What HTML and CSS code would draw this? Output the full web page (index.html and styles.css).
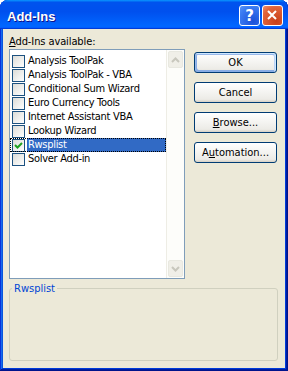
FILE: index.html
```html
<!DOCTYPE html>
<html>
<head>
<title>Add-Ins</title>
<link rel="stylesheet" href="styles.css">
</head>
<body>
<div class="window">
    <div class="title-bar">
        <span class="title">Add-Ins</span>
        <div class="title-buttons">
            <span class="tb tb-help">?</span>
            <span class="tb tb-close">
                <svg width="21" height="21" viewBox="0 0 21 21"><path d="M6 6 L14 14 M14 6 L6 14" stroke="#fff" stroke-width="2" fill="none"/></svg>
            </span>
        </div>
    </div>

    <div class="client">
        <div class="main">
            <div class="left">
                <div class="label"><u>A</u>dd-Ins available:</div>
                <div class="listbox">
                    <ul class="items">
                        <li><span class="cb"></span><span class="text">Analysis ToolPak</span></li>
                        <li><span class="cb"></span><span class="text">Analysis ToolPak - VBA</span></li>
                        <li><span class="cb"></span><span class="text">Conditional Sum Wizard</span></li>
                        <li><span class="cb"></span><span class="text">Euro Currency Tools</span></li>
                        <li><span class="cb"></span><span class="text">Internet Assistant VBA</span></li>
                        <li><span class="cb"></span><span class="text">Lookup Wizard</span></li>
                        <li class="selected"><span class="cb checked"><svg width="11" height="11" viewBox="0 0 11 11"><path d="M2 5 L4.5 7.5 L9 3" stroke="#21a121" stroke-width="2" fill="none"/></svg></span><span class="text">Rwsplist</span></li>
                        <li><span class="cb"></span><span class="text">Solver Add-in</span></li>
                    </ul>
                    <div class="scrollbar">
                        <div class="sb-btn">
                            <svg width="9" height="6" viewBox="0 0 9 6"><path d="M1 5 L4.5 1.5 L8 5" stroke="#c8c7bd" stroke-width="2" fill="none"/></svg>
                        </div>
                        <div class="track"></div>
                        <div class="sb-btn">
                            <svg width="9" height="6" viewBox="0 0 9 6"><path d="M1 1 L4.5 4.5 L8 1" stroke="#c8c7bd" stroke-width="2" fill="none"/></svg>
                        </div>
                    </div>
                </div>
            </div>

            <div class="buttons">
                <div class="btn default">OK</div>
                <div class="btn">Cancel</div>
                <div class="btn"><u>B</u>rowse...</div>
                <div class="btn">A<u>u</u>tomation...</div>
            </div>
        </div>

        <fieldset class="group">
            <legend>Rwsplist</legend>
        </fieldset>
    </div>
</div>
</body>
</html>
```

FILE: styles.css
```css
html, body {
    margin: 0;
    padding: 0;
    background: #fff;
}

body {
    width: 288px;
    height: 371px;
    font-family: "DejaVu Sans Condensed", "DejaVu Sans", sans-serif;
    font-stretch: condensed;
    font-size: 11px;
    color: #000;
}

.window {
    width: 288px;
    height: 371px;
    box-sizing: border-box;
    padding: 0 3px 3px 3px;
    background: #0831d9;
    border-radius: 8px 8px 0 0;
    box-shadow: inset -1px -1px #00138c, inset 1px 1px #0831d9, inset -2px -2px #001ea0, inset 2px 2px #166aee, inset -3px -3px #003bda, inset 3px 3px #0855dd;
    display: flex;
    flex-direction: column;
}

.title-bar {
    height: 29px;
    margin: 0 -3px;
    padding: 0 5px 0 7px;
    box-sizing: border-box;
    border-radius: 8px 8px 0 0;
    background: linear-gradient(180deg, #0997ff, #0053ee 8%, #0050ee 40%, #06f 88%, #06f 93%, #005bff 95%, #003dd7 96%, #003dd7);
    display: flex;
    align-items: center;
    justify-content: space-between;
}

.title {
    color: #fff;
    font-family: "Liberation Sans", Arial, sans-serif;
    font-stretch: normal;
    font-weight: bold;
    font-size: 13px;
    padding-top: 3px;
    text-shadow: 1px 1px #0f1089;
}

.title-buttons {
    display: flex;
    gap: 2px;
    padding-top: 2px;
}

.tb {
    width: 21px;
    height: 21px;
    box-sizing: border-box;
    border: 1px solid #fff;
    border-radius: 3px;
    display: flex;
    align-items: center;
    justify-content: center;
}

.tb-help {
    background: radial-gradient(circle at 70% 80%, #1b50d8, #3a7bf2 70%, #5a95f7);
    color: #fff;
    font-family: "DejaVu Sans", sans-serif;
    font-stretch: normal;
    font-weight: bold;
    font-size: 15px;
}

.tb-close {
    background: radial-gradient(circle at 70% 80%, #c8401a, #e2643a 70%, #ed9070);
}

.tb-close svg {
    margin: -1px;
}

.client {
    flex: 1;
    background: #ece9d8;
    padding: 6px 7px 7px 6px;
    display: flex;
    flex-direction: column;
}

.main {
    display: flex;
    gap: 9px;
}

.left {
    width: 176px;
}

.label {
    line-height: 13px;
    margin-bottom: 1px;
    letter-spacing: -0.1px;
}

.listbox {
    height: 230px;
    box-sizing: border-box;
    border: 1px solid #7f9db9;
    background: #fff;
    display: flex;
}

.items {
    list-style: none;
    margin: 0;
    padding: 4px 0 0 0;
    flex: 1;
}

.items li {
    height: 14px;
    display: flex;
    align-items: center;
    padding-left: 2px;
    box-sizing: border-box;
}

.cb {
    width: 13px;
    height: 13px;
    box-sizing: border-box;
    border: 1px solid #1c5180;
    background: linear-gradient(135deg, #dcdcd7, #fff);
    margin-right: 2px;
    display: flex;
    align-items: center;
    justify-content: center;
}

.text {
    flex: 1;
    line-height: 14px;
    padding-left: 1px;
    white-space: nowrap;
    letter-spacing: -0.3px;
}

.selected {
    outline: 1px dotted #000;
    outline-offset: -1px;
}

.selected .text {
    background: #316ac5;
    color: #fff;
}

.scrollbar {
    width: 17px;
    display: flex;
    flex-direction: column;
    background: #fdfdfa;
    border-left: 1px solid #eeede5;
}

.track {
    flex: 1;
}

.sb-btn {
    height: 17px;
    margin: 1px;
    box-sizing: border-box;
    border: 1px solid #e8e8e0;
    border-radius: 2px;
    background: #f0efe8;
    display: flex;
    align-items: center;
    justify-content: center;
}

.buttons {
    display: flex;
    flex-direction: column;
    gap: 9px;
    padding-top: 17px;
}

.btn {
    width: 83px;
    height: 21px;
    box-sizing: border-box;
    border: 1px solid #003c74;
    border-radius: 3px;
    background: linear-gradient(180deg, #fff, #ecebe6 86%, #d6d0c5);
    display: flex;
    align-items: center;
    justify-content: center;
}

.btn.default {
    box-shadow: inset -1px 1px #cee7ff, inset 1px 2px #98b8ea, inset -2px 2px #bcd4f6, inset 1px -1px #89ade4, inset 2px -2px #89ade4;
}

.group {
    margin: 3px 0 0 0;
    flex: 1;
    border: 1px solid #d0d0bf;
    border-radius: 3px;
    padding: 0 2px;
}

.group legend {
    color: #0046d5;
    padding: 0 2px;
    line-height: 13px;
}
```
